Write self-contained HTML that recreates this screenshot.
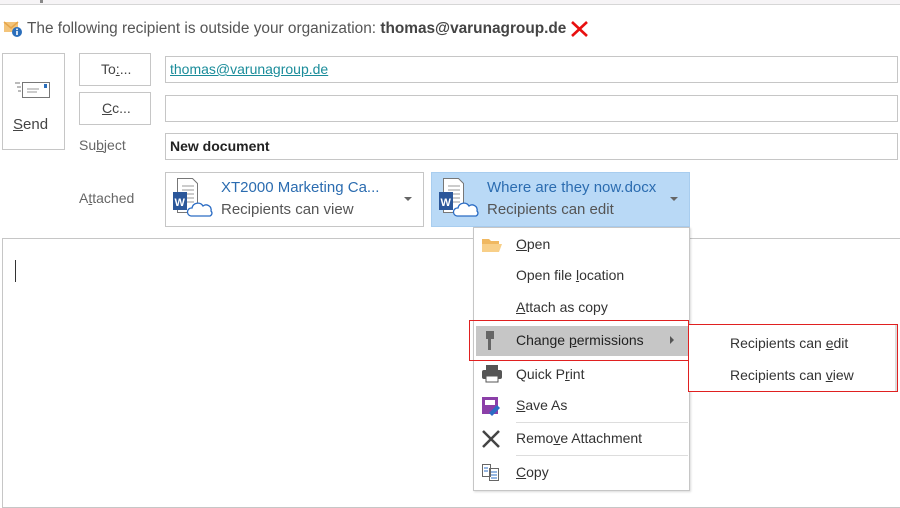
<!DOCTYPE html>
<html><head><meta charset="utf-8"><style>
*{margin:0;padding:0;box-sizing:border-box}
body{width:900px;height:495px;background:#fff;position:relative;overflow:hidden;font-family:"Liberation Sans",sans-serif;font-size:14px;color:#444}
.a{position:absolute}
.btn{position:absolute;border:1px solid #c6c6c6;background:#fff}
.fld{position:absolute;border:1px solid #c6c6c6;background:#fff;left:165px;right:2px;height:27px}
u{text-decoration:underline}
.mi{position:absolute;left:516px;font-size:14px;color:#333}
.ic{position:absolute;left:481px}
</style></head><body>
<div class="a" style="left:0;top:0;width:900px;height:5px;background:#f6f4f6;border-bottom:1px solid #d6d6d6"></div>
<div class="a" style="left:40px;top:0;width:3px;height:3px;background:#888"></div>
<svg class="a" style="left:3px;top:20px" width="20" height="18" viewBox="0 0 20 18">
<path d="M1 2h14v10H1z" fill="#f3c47a"/><path d="M1 2l7 6 7-6" fill="none" stroke="#e6a54a" stroke-width="1.5"/>
<circle cx="14" cy="12" r="5" fill="#2a6ebb"/><rect x="13.2" y="11" width="1.6" height="4" fill="#fff"/><rect x="13.2" y="8.6" width="1.6" height="1.5" fill="#fff"/></svg>
<div class="a" style="left:27px;top:20px;font-size:15.4px;color:#555">The following recipient is outside your organization: <b style="color:#444">thomas@varunagroup.de</b></div>
<svg class="a" style="left:570px;top:20px" width="20" height="18"><path d="M2 2L17 16M17 2L2 16" stroke="#e81010" stroke-width="2.6"/></svg>
<div class="btn" style="left:2px;top:53px;width:63px;height:97px"></div>
<svg class="a" style="left:14px;top:79px" width="38" height="22"><path d="M1 4h5M3 8h4M4 12h3" stroke="#777" stroke-width="1"/><rect x="8.5" y="3.5" width="27" height="15" fill="#fff" stroke="#777"/><path d="M13 10h12M13 13h10" stroke="#999"/><rect x="30" y="5" width="3" height="4" fill="#2a6ebb"/></svg>
<div class="a" style="left:13px;top:116px;font-size:15px;color:#444"><u>S</u>end</div>
<div class="btn" style="left:79px;top:53px;width:72px;height:33px"></div>
<div class="a" style="left:101px;top:61px;font-size:14px">To<u>:</u>...</div>
<div class="btn" style="left:79px;top:92px;width:72px;height:33px"></div>
<div class="a" style="left:102px;top:100px;font-size:14px"><u>C</u>c...</div>
<div class="fld" style="top:56px"></div>
<div class="a" style="left:170px;top:61px;font-size:14px;color:#1a8c9a;text-decoration:underline">thomas@varunagroup.de</div>
<div class="fld" style="top:95px"></div>
<div class="a" style="left:79px;top:137px;font-size:14px;color:#666">Su<u>b</u>ject</div>
<div class="fld" style="top:133px"></div>
<div class="a" style="left:170px;top:138px;font-size:14px;color:#222;font-weight:bold">New document</div>
<div class="a" style="left:79px;top:190px;font-size:14px;color:#666">A<u>t</u>tached</div>
<div class="btn" style="left:165px;top:172px;width:259px;height:55px"></div>
<svg class="a" style="left:172px;top:177px" width="44" height="42" viewBox="0 0 44 42"><path d="M5.5 1.5h15l5 5v29h-20z" fill="#fff" stroke="#777"/><path d="M10 9h12M10 13h12M10 17h12M10 21h12M10 25h12" stroke="#999"/><rect x="1" y="15" width="14" height="18" fill="#2b579a"/><text x="2.5" y="29" font-family="Liberation Sans" font-size="11" font-weight="bold" fill="#fff">W</text><path d="M19 39a4 4 0 0 1 1-8a6 6 0 0 1 11-2a5 5 0 0 1 8 5a3 3 0 0 1 -1 5z" fill="#fff" stroke="#2b6cc4" stroke-width="1.3"/></svg>
<div class="a" style="left:221px;top:179px;font-size:15px;color:#2b6cb0">XT2000 Marketing Ca...</div>
<div class="a" style="left:221px;top:201px;font-size:15px;color:#555">Recipients can view</div>
<div class="a" style="left:404px;top:197px;border:4px solid transparent;border-top:4px solid #666;border-bottom:0"></div>
<div class="a" style="left:431px;top:172px;width:259px;height:55px;background:#b9d9f6;border:1px solid #a8cdef"></div>
<svg class="a" style="left:438px;top:177px" width="44" height="42" viewBox="0 0 44 42"><path d="M5.5 1.5h15l5 5v29h-20z" fill="#fff" stroke="#777"/><path d="M10 9h12M10 13h12M10 17h12M10 21h12M10 25h12" stroke="#999"/><rect x="1" y="15" width="14" height="18" fill="#2b579a"/><text x="2.5" y="29" font-family="Liberation Sans" font-size="11" font-weight="bold" fill="#fff">W</text><path d="M19 39a4 4 0 0 1 1-8a6 6 0 0 1 11-2a5 5 0 0 1 8 5a3 3 0 0 1 -1 5z" fill="#fff" stroke="#2b6cc4" stroke-width="1.3"/></svg>
<div class="a" style="left:487px;top:179px;font-size:15px;color:#2b6cb0">Where are they now.docx</div>
<div class="a" style="left:487px;top:201px;font-size:15px;color:#555">Recipients can edit</div>
<div class="a" style="left:670px;top:197px;border:4px solid transparent;border-top:4px solid #666;border-bottom:0"></div>
<div class="a" style="left:2px;top:238px;width:900px;height:270px;border:1px solid #c6c6c6"></div>
<div class="a" style="left:15px;top:260px;width:1px;height:22px;background:#333"></div>
<div class="a" style="left:473px;top:227px;width:217px;height:264px;background:#fff;border:1px solid #c6c6c6;box-shadow:1px 1px 2px rgba(0,0,0,.15)"></div>
<svg class="ic" style="top:236px" width="22" height="18"><path d="M1 3h7l2 2h8v11H1z" fill="#f0b860"/><path d="M1 8h20l-3 8H1z" fill="#f8cf88"/></svg>
<div class="mi" style="top:236px"><u>O</u>pen</div>
<div class="mi" style="top:267px">Open file <u>l</u>ocation</div>
<div class="mi" style="top:299px"><u>A</u>ttach as copy</div>
<div class="a" style="left:476px;top:326px;width:212px;height:30px;background:#c6c6c6"></div>
<div class="a" style="left:469px;top:320px;width:220px;height:41px;border:1.5px solid #e02020"></div>
<svg class="ic" style="top:331px;left:484px" width="12" height="20"><rect x="2" y="0" width="8" height="8" fill="#666"/><rect x="4" y="7" width="3" height="12" fill="#666"/></svg>
<div class="mi" style="top:332px;color:#222">Change <u>p</u>ermissions</div>
<div class="a" style="left:670px;top:336px;border:4px solid transparent;border-left:4px solid #555;border-right:0"></div>
<svg class="ic" style="top:364px" width="22" height="20"><rect x="5" y="1" width="12" height="5" fill="#555"/><rect x="1" y="6" width="20" height="9" rx="2" fill="#555"/><rect x="5" y="12" width="12" height="6" fill="#fff" stroke="#555"/></svg>
<div class="mi" style="top:366px">Quick P<u>r</u>int</div>
<svg class="ic" style="top:396px" width="22" height="20"><rect x="1" y="1" width="16" height="17" fill="#8b3fa8"/><rect x="4" y="4" width="10" height="5" fill="#fff"/><path d="M8 17l8-8 3 3-8 8z" fill="#2b6cc4"/></svg>
<div class="mi" style="top:397px"><u>S</u>ave As</div>
<div class="a" style="left:516px;top:422px;width:172px;height:1px;background:#ddd"></div>
<svg class="ic" style="top:429px" width="22" height="20"><path d="M2 2L18 18M18 2L2 18" stroke="#444" stroke-width="2.5"/></svg>
<div class="mi" style="top:430px">Remo<u>v</u>e Attachment</div>
<div class="a" style="left:516px;top:455px;width:172px;height:1px;background:#ddd"></div>
<svg class="ic" style="top:463px" width="22" height="20"><path d="M1.5 1.5h8v12h-8zM8.5 5.5h9v12h-9z" fill="#fff" stroke="#666"/><path d="M3 5h4M3 8h4M10 9h6M10 12h6M10 15h6" stroke="#2b6cc4"/></svg>
<div class="mi" style="top:464px"><u>C</u>opy</div>
<div class="a" style="left:688px;top:324px;width:210px;height:68px;background:#fff;border:1.5px solid #e02020;box-shadow:inset -2px 0 0 #ddd"></div>
<div class="a" style="left:730px;top:335px;font-size:14px;color:#333">Recipients can <u>e</u>dit</div>
<div class="a" style="left:730px;top:367px;font-size:14px;color:#333">Recipients can <u>v</u>iew</div>
</body></html>
